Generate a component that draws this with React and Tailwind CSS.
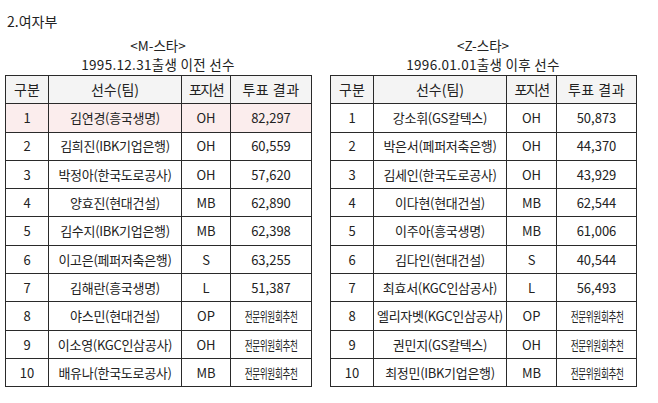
import React from "react";

// M-스타 (1995.12.31 이전 출생)
const M_STAR = [
  { no: 1, name: "김연경(흥국생명)", pos: "OH", votes: "82,297" },
  { no: 2, name: "김희진(IBK기업은행)", pos: "OH", votes: "60,559" },
  { no: 3, name: "박정아(한국도로공사)", pos: "OH", votes: "57,620" },
  { no: 4, name: "양효진(현대건설)", pos: "MB", votes: "62,890" },
  { no: 5, name: "김수지(IBK기업은행)", pos: "MB", votes: "62,398" },
  { no: 6, name: "이고은(페퍼저축은행)", pos: "S", votes: "63,255" },
  { no: 7, name: "김해란(흥국생명)", pos: "L", votes: "51,387" },
  { no: 8, name: "야스민(현대건설)", pos: "OP", votes: null },
  { no: 9, name: "이소영(KGC인삼공사)", pos: "OH", votes: null },
  { no: 10, name: "배유나(한국도로공사)", pos: "MB", votes: null },
];

// Z-스타 (1996.01.01 이후 출생)
const Z_STAR = [
  { no: 1, name: "강소휘(GS칼텍스)", pos: "OH", votes: "50,873" },
  { no: 2, name: "박은서(페퍼저축은행)", pos: "OH", votes: "44,370" },
  { no: 3, name: "김세인(한국도로공사)", pos: "OH", votes: "43,929" },
  { no: 4, name: "이다현(현대건설)", pos: "MB", votes: "62,544" },
  { no: 5, name: "이주아(흥국생명)", pos: "MB", votes: "61,006" },
  { no: 6, name: "김다인(현대건설)", pos: "S", votes: "40,544" },
  { no: 7, name: "최효서(KGC인삼공사)", pos: "L", votes: "56,493" },
  { no: 8, name: "엘리자벳(KGC인삼공사)", pos: "OP", votes: null },
  { no: 9, name: "권민지(GS칼텍스)", pos: "OH", votes: null },
  { no: 10, name: "최정민(IBK기업은행)", pos: "MB", votes: null },
];

const cell = "border border-[#2a2a2a] h-[28.3px] p-0 text-center align-middle";

function StarTable({ title, subtitle, rows, widths, highlightFirst }) {
  return (
    <div className="w-[306px]">
      <div className="text-center text-[13.5px] leading-[19px]">{title}</div>
      <div className="text-center text-[13.5px] leading-[19px] tracking-[0.3px]">{subtitle}</div>
      <table className="mt-[1px] w-full border-collapse table-fixed">
        <colgroup>
          {widths.map((w, i) => (
            <col key={i} style={{ width: w }} />
          ))}
        </colgroup>
        <thead>
          <tr className="bg-[#f4f4f4] text-[14px]">
            <th className={cell + " font-normal"}>구분</th>
            <th className={cell + " font-normal"}>선수(팀)</th>
            <th className={cell + " font-normal tracking-[-1.5px]"}>포지션</th>
            <th className={cell + " font-normal tracking-[0.5px]"}>투표 결과</th>
          </tr>
        </thead>
        <tbody>
          {rows.map((r) => (
            <tr key={r.no} className={highlightFirst && r.no === 1 ? "bg-[#fbeded]" : ""}>
              <td className={cell}>{r.no}</td>
              <td className={cell + " whitespace-nowrap tracking-[-0.3px]"}>{r.name}</td>
              <td className={cell}>{r.pos}</td>
              <td className={cell}>
                {r.votes ? (
                  r.votes
                ) : (
                  <span className="inline-block scale-x-[0.66] text-[13px] tracking-[-0.5px] whitespace-nowrap">
                    전문위원회추천
                  </span>
                )}
              </td>
            </tr>
          ))}
        </tbody>
      </table>
    </div>
  );
}

export default function App() {
  return (
    <div
      className="w-[658px] h-[403px] bg-white text-[#222] text-[13px] overflow-hidden"
      style={{ fontFamily: '"Noto Sans CJK KR", "Noto Sans", sans-serif' }}
    >
      <div className="pl-[7px] pt-[12px] text-[14px] leading-[19px]">2.여자부</div>
      <div className="flex gap-[19px] pl-[5px] mt-[5px]">
        <StarTable
          title="<M-스타>"
          subtitle="1995.12.31출생 이전 선수"
          rows={M_STAR}
          widths={[43, 133, 49, 81]}
          highlightFirst
        />
        <StarTable
          title="<Z-스타>"
          subtitle="1996.01.01출생 이후 선수"
          rows={Z_STAR}
          widths={[43, 133, 50, 80]}
        />
      </div>
    </div>
  );
}
